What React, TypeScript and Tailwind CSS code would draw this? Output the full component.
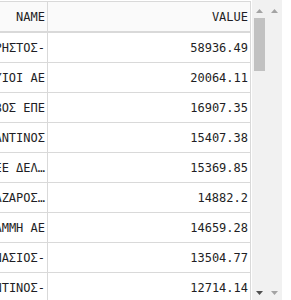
const topRows: [string, string][] = [
  ['ΠΑΠΑΔΟΠΟΥΛΟΣ ΧΡΗΣΤΟΣ-', '58936.49'],
  ['ΓΕΩΡΓΙΟΥ ΚΑΙ ΥΙΟΙ ΑΕ', '20064.11'],
  ['ΣΤΑΥΡΟΠΟΥΛΟΣ ΚΑΙ ΑΛΒΟΣ ΕΠΕ', '16907.35'],
  ['ΔΗΜΗΤΡΙΟΥ ΚΩΝΣΤΑΝΤΙΝΟΣ', '15407.38'],
  ['ΚΑΡΑΓΙΑΝΝΗΣ ΕΕ ΔΕΛ…', '15369.85'],
  ['ΙΩΑΝΝΙΔΗΣ ΛΑΖΑΡΟΣ…', '14882.2'],
  ['ΝΕΑ ΓΡΑΜΜΗ ΑΕ', '14659.28'],
  ['ΝΙΚΟΛΑΟΥ ΑΘΑΝΑΣΙΟΣ-', '13504.77'],
  ['ΜΙΧΑΗΛΙΔΗΣ ΚΩΝΣΤΑΝΤΙΝΟΣ-', '12714.14'],
];

function Arrow({ down, color }: { down?: boolean; color: string }) {
  return (
    <svg width="7" height="4" viewBox="0 0 7 4" aria-hidden="true">
      <polygon points={down ? '0,0 7,0 3.5,4' : '0,4 7,4 3.5,0'} fill={color} />
    </svg>
  );
}

// drawn scroll track, since the page shot hides the real one
function ScrollTrack({ thumb, upColor, downColor }: { thumb?: boolean; upColor: string; downColor: string }) {
  return (
    <div className="flex h-full w-[15px] flex-col items-center bg-[#f1f1f1]">
      <div className="flex h-[17px] w-full shrink-0 items-center justify-center pt-[4px]">
        <Arrow color={upColor} />
      </div>
      <div className="w-full flex-1 px-[2px] pt-px">
        {thumb && <div className="h-[53px] w-full bg-[#c1c1c1]" />}
      </div>
      <div className="flex h-[17px] w-full shrink-0 items-center justify-center pt-[3px]">
        <Arrow down color={downColor} />
      </div>
    </div>
  );
}

export default function App() {
  return (
    <div
      className="flex h-[300px] w-[282px] overflow-hidden bg-white text-[12px] text-[#1e1e24]"
      style={{ fontFamily: '"DejaVu Sans Mono", monospace' }}
    >
      <div className="h-full w-[252px] shrink-0 overflow-hidden">
        <div className="mt-px w-[251px]">
          <div className="grid h-[32px] grid-cols-[48px_1fr] border-t border-b-2 border-[#d9d9d9] bg-[#fafafa]">
            <div className="flex items-center justify-end overflow-hidden border-r border-[#d9d9d9] pr-[2px]">
              <span className="shrink-0 whitespace-nowrap">NAME</span>
            </div>
            <div className="flex items-center justify-end border-r border-[#d9d9d9] pr-[2px]">
              VALUE
            </div>
          </div>
          {topRows.map(([name, value], i) => (
            <div
              key={i}
              className="grid h-[30px] grid-cols-[48px_1fr] border-b border-[#d9d9d9]"
            >
              <div className="flex items-center justify-end overflow-hidden border-r border-[#d9d9d9] pr-[2px]">
                <span className="shrink-0 whitespace-nowrap">{name}</span>
              </div>
              <div className="flex items-center justify-end border-r border-[#d9d9d9] pr-[2px]">
                {value}
              </div>
            </div>
          ))}
        </div>
      </div>
      <ScrollTrack thumb upColor="#a3a3a3" downColor="#505050" />
      <ScrollTrack upColor="#a3a3a3" downColor="#a3a3a3" />
    </div>
  );
}
